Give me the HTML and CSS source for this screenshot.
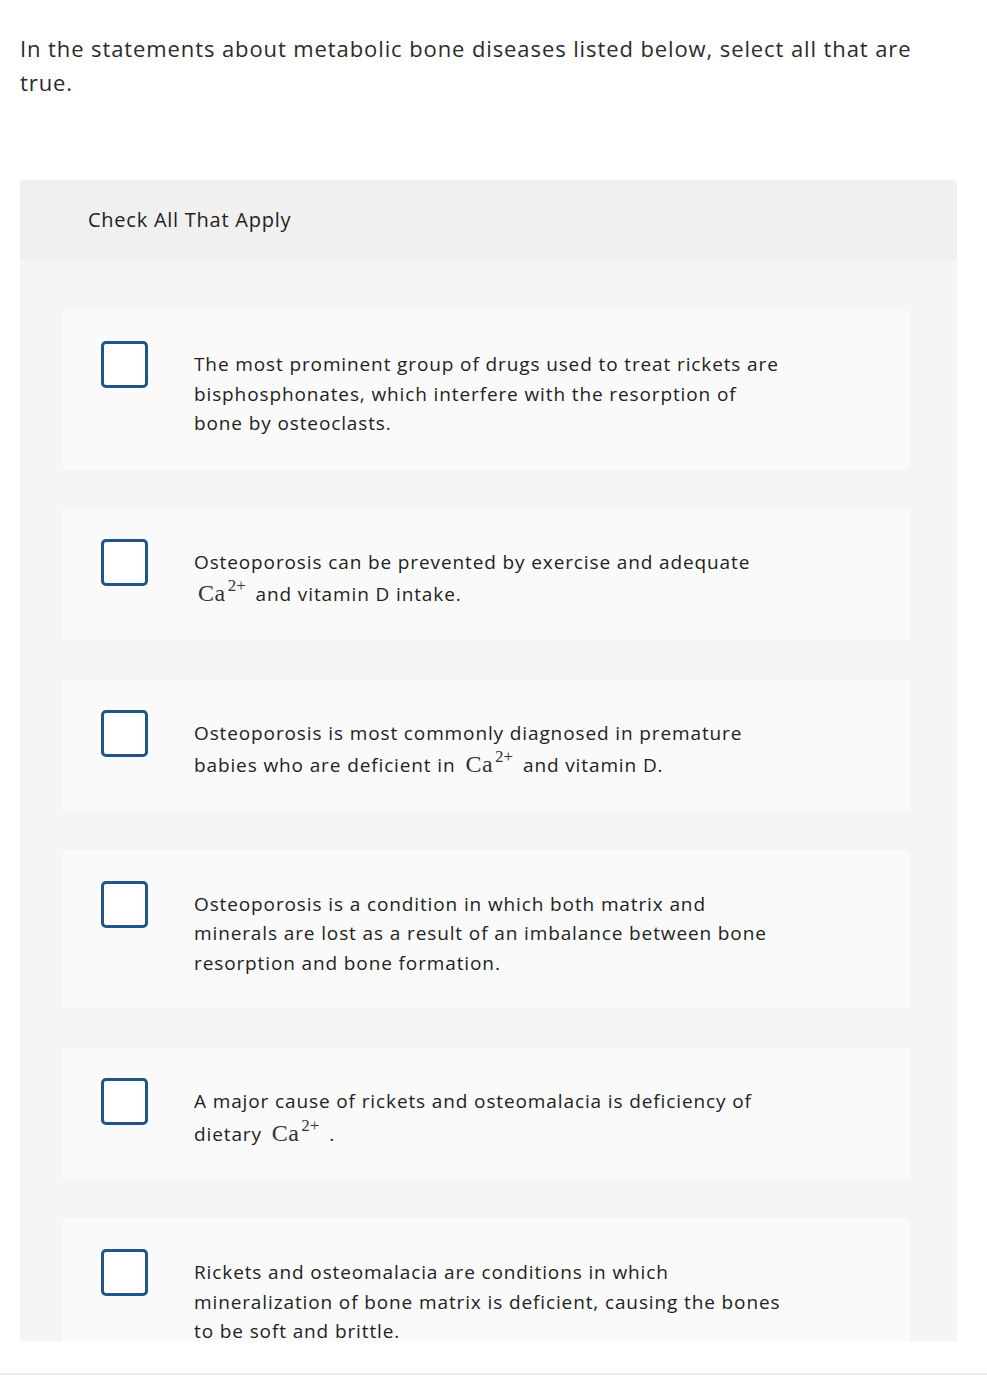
FILE: index.html
```html
<!DOCTYPE html>
<html lang="en">
<head>
    <meta charset="UTF-8">
    <title>Check All That Apply</title>
    <link rel="stylesheet" href="styles.css">
</head>
<body>
    <div class="page">
        <p class="prompt">In the statements about metabolic bone diseases listed below, select all that are true.</p>

        <div class="panel">
            <div class="panel-header">Check All That Apply</div>
            <div class="panel-body">
                <label class="choice">
                    <span class="box"></span>
                    <span class="choice-text">The most prominent group of drugs used to treat rickets are bisphosphonates, which interfere with the resorption of bone by osteoclasts.</span>
                </label>
                <label class="choice">
                    <span class="box"></span>
                    <span class="choice-text">Osteoporosis can be prevented by exercise and adequate <span class="math">Ca<sup>2+</sup></span> and vitamin D intake.</span>
                </label>
                <label class="choice">
                    <span class="box"></span>
                    <span class="choice-text">Osteoporosis is most commonly diagnosed in premature babies who are deficient in <span class="math">Ca<sup>2+</sup></span> and vitamin D.</span>
                </label>
                <label class="choice">
                    <span class="box"></span>
                    <span class="choice-text">Osteoporosis is a condition in which both matrix and minerals are lost as a result of an imbalance between bone resorption and bone formation.</span>
                </label>
                <label class="choice">
                    <span class="box"></span>
                    <span class="choice-text">A major cause of rickets and osteomalacia is deficiency of dietary <span class="math">Ca<sup>2+</sup></span> .</span>
                </label>
                <label class="choice">
                    <span class="box"></span>
                    <span class="choice-text">Rickets and osteomalacia are conditions in which mineralization of bone matrix is deficient, causing the bones to be soft and brittle.</span>
                </label>
            </div>
        </div>
    </div>
    <div class="footer-line"></div>
</body>
</html>
```

FILE: styles.css
```css
body {
    margin: 0;
    background: #fff;
    font-family: "Open Sans", Arial, sans-serif;
    color: #2b2b2b;
}
.page {
    padding: 0 30px 0 20px;
    height: 1341px;
    overflow: hidden;
}
.prompt {
    margin: 0;
    padding-top: 31px;
    font-size: 22px;
    line-height: 34px;
    letter-spacing: 0.9px;
    width: 937px;
}
.panel {
    margin-top: 81px;
    width: 937px;
    border-radius: 4px 4px 0 0;
    overflow: hidden;
}
.panel-header {
    background: #f0f0f0;
    height: 80px;
    line-height: 80px;
    padding-left: 68px;
    font-size: 20px;
    letter-spacing: 0.75px;
    color: #222;
}
.panel-body {
    background: #f5f5f5;
    padding: 51px 47px 40px 42px;
    display: flex;
    flex-direction: column;
    gap: 40px;
}
.choice {
    display: flex;
    align-items: flex-start;
    background: #fafafa;
    border-radius: 4px;
    padding: 30px 0 30px 39px;
}
.box {
    flex: none;
    width: 41px;
    height: 41px;
    border: 3px solid #1f5587;
    border-radius: 5px;
    background: #fff;
}
.choice-text {
    margin-left: 46px;
    padding-top: 9px;
    width: 592px;
    font-size: 19px;
    line-height: 29.5px;
    letter-spacing: 0.88px;
    color: #222;
}
.math {
    font-family: "Liberation Serif", "Times New Roman", serif;
    font-size: 24px;
    letter-spacing: 0.5px;
    margin: 0 4px 0 4px;
    color: #333;
}
.math sup {
    font-size: 17px;
    vertical-align: 10px;
    line-height: 1;
    margin-left: 2px;
    letter-spacing: 0;
}
.footer-line {
    height: 2px;
    margin-top: 32px;
    background: #eee;
}
```
